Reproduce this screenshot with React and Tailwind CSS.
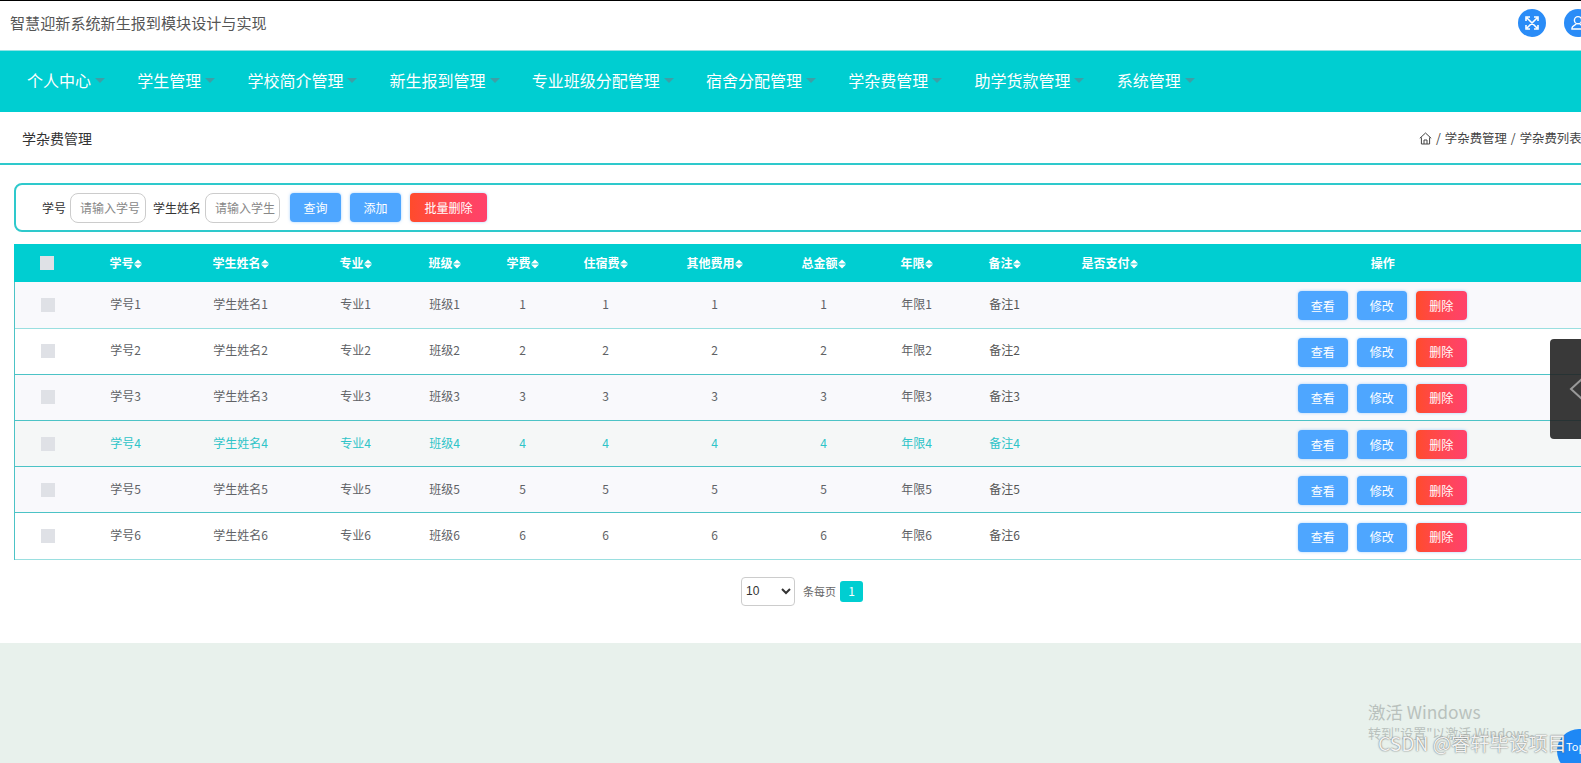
import React from "react";

const cols = [
  ["学号", 90], ["学生姓名", 140], ["专业", 90], ["班级", 88], ["学费", 68], ["住宿费", 98],
  ["其他费用", 120], ["总金额", 98], ["年限", 88], ["备注", 88], ["是否支付", 122],
];
const nav = ["个人中心", "学生管理", "学校简介管理", "新生报到管理", "专业班级分配管理", "宿舍分配管理", "学杂费管理", "助学货款管理", "系统管理"];
const rows = [1, 2, 3, 4, 5, 6];

function Sort() {
  return (
    <svg className="inline-block align-[-1px]" width="8" height="10" viewBox="0 0 8 10" fill="#fff">
      <path d="M4 0.5 8 4.4H0z" />
      <path d="M4 9.5 0 5.6h8z" />
    </svg>
  );
}

function Btn({ children, red, w }) {
  return (
    <button className={`${w} h-[29px] rounded-[4px] text-[12px] text-white shadow-[0_0_3px_rgba(78,166,255,0.5)] ${red ? "bg-gradient-to-r from-[#ff4b2b] to-[#ff416c]" : "bg-[#4ea6ff]"}`}>
      {children}
    </button>
  );
}

export default function App() {
  return (
    <div className="relative w-[1581px] h-[763px] overflow-hidden flex flex-col bg-[#e8f1ec] font-['Noto_Sans_CJK_SC','Liberation_Sans',sans-serif]">
      <header className="h-[50px] shrink-0 bg-white border-t border-black flex items-center pl-[10px] pr-0 justify-between overflow-hidden">
        <span className="text-[15.1px] text-[#555] -mt-[7px]">智慧迎新系统新生报到模块设计与实现</span>
        <div className="flex gap-[18px] -mr-[11px] -mt-[5px]">
          <span className="w-[28px] h-[28px] rounded-full bg-[#2a8cf7] flex items-center justify-center">
            <svg width="16" height="16" viewBox="0 0 16 16" fill="none" stroke="#fff" strokeWidth="1.6">
              <path d="M2 6V2h4M14 6V2h-4M2 10v4h4M14 10v4h-4M3 3l10 10M13 3 3 13" />
            </svg>
          </span>
          <span className="w-[28px] h-[28px] rounded-full bg-[#2a8cf7] flex items-center justify-center">
            <svg width="16" height="16" viewBox="0 0 16 16" fill="none" stroke="#fff" strokeWidth="1.4">
              <circle cx="8" cy="5.2" r="3.6" />
              <path d="M6 9c0 1-4 1.6-4 4v1h12v-1c0-2.4-4-3-4-4" />
            </svg>
          </span>
        </div>
      </header>

      <nav className="h-[62px] shrink-0 bg-[#00ced1] border-t border-[#8fe3e5] flex items-center pl-[27px] gap-[32.2px] text-white text-[16px]">
        {nav.map((n) => (
          <div key={n} className="flex items-center whitespace-nowrap -mt-[4px]">
            <span>{n}</span>
            <span className="ml-[4px] mt-[2px] w-0 h-0 border-x-[5px] border-x-transparent border-t-[5px] border-t-[#3f9ea6]" />
          </div>
        ))}
      </nav>

      <div className="h-[53px] shrink-0 bg-white border-b-2 border-[#2ec9cc] flex items-center justify-between pl-[22px]">
        <span className="text-[14px] text-[#333] mt-[2px]">学杂费管理</span>
        <div className="flex items-center text-[12.4px] text-[#444] whitespace-nowrap w-[162px] shrink-0 overflow-hidden mt-[2px]">
          <svg className="shrink-0" width="13" height="13" viewBox="0 0 13 13" fill="none" stroke="#444" strokeWidth="1">
            <path d="M.8 6.3 6.5 1l5.7 5.3M2.4 5.4V12h8.2V5.4M5 12V8h3v4" />
          </svg>
          <span className="mx-[4px]">/</span>
          <span>学杂费管理</span>
          <span className="mx-[4px]">/</span>
          <span>学杂费列表</span>
        </div>
      </div>

      <main className="h-[478px] shrink-0 bg-white pt-[18px] pl-[14px]">
        <div className="w-[1600px] h-[49px] border-2 border-[#2ec9cc] rounded-[8px] flex items-center pl-[26px] text-[12px]">
          <label className="text-[#333] mr-[4px]">学号</label>
          <div className="w-[76px] h-[30px] border border-[#ccc] rounded-[8px] flex items-center pl-[9px] text-[#888] mr-[7px]">请输入学号</div>
          <label className="text-[#333] mr-[4px]">学生姓名</label>
          <div className="w-[75px] h-[30px] border border-[#ccc] rounded-[8px] flex items-center pl-[9px] text-[#888] overflow-hidden whitespace-nowrap mr-[10px]">请输入学生</div>
          <div className="flex gap-[9px]">
            <Btn w="w-[51px]">查询</Btn>
            <Btn w="w-[51px]">添加</Btn>
            <Btn w="w-[77px]" red>批量删除</Btn>
          </div>
        </div>

        <table className="mt-[12px] -ml-[0.5px] w-[1581px] table-fixed border-collapse text-[12px] text-[#606266]">
          <colgroup>
            <col className="w-[66.5px]" />
            {cols.map(([n, w]) => (
              <col key={n} style={{ width: w }} />
            ))}
            <col className="w-[424.5px]" />
          </colgroup>
          <thead>
            <tr className="h-[38px] bg-[#00ced1] text-white">
              <th className="font-normal">
                <span className="block mx-auto w-[14px] h-[14px] bg-[#dfe1e6]" />
              </th>
              {cols.map(([n]) => (
                <th key={n} className="font-bold whitespace-nowrap">
                  {n}
                  <Sort />
                </th>
              ))}
              <th className="font-bold">操作</th>
            </tr>
          </thead>
          <tbody>
            {rows.map((r) => {
              const hover = r === 4;
              const bg = hover ? "bg-[#f5f7f7] text-[#2ec4c8]" : r % 2 ? "bg-[#f9f9fc]" : "bg-white";
              const line = r === 1 || r === 6 ? "border-[#9adfe0]" : "border-[#4cc3c6]";
              return (
                <tr key={r} className={`h-[46.2px] border-b ${line} ${bg}`}>
                  <td className="border-l border-[#4cc3c6]">
                    <span className="block mx-auto w-[14px] h-[14px] bg-[#dfe1e6]" />
                  </td>
                  {[`学号${r}`, `学生姓名${r}`, `专业${r}`, `班级${r}`, r, r, r, r, `年限${r}`].map((c, i) => (
                    <td key={i} className="text-center pb-[2px]">{c}</td>
                  ))}
                  <td className={`text-center pb-[2px] ${hover ? "text-[#2ec4c8]" : "text-[#555]"}`}>{`备注${r}`}</td>
                  <td />
                  <td>
                    <div className="flex justify-center gap-[9px] pt-[2px] pr-[1px]">
                      <Btn w="w-[50px]">查看</Btn>
                      <Btn w="w-[50px]">修改</Btn>
                      <Btn w="w-[51px]" red>删除</Btn>
                    </div>
                  </td>
                </tr>
              );
            })}
          </tbody>
        </table>

        <div className="mt-[17px] ml-[727px] flex items-center text-[11px] text-[#666]">
          <select className="w-[54px] h-[29px] border border-[#ccc] rounded-[4px] bg-white text-[12px] text-[#333] font-['Liberation_Sans',sans-serif]">
            <option>10</option>
          </select>
          <span className="ml-[8px]">条每页</span>
          <span className="ml-[4px] w-[23px] h-[21px] rounded-[3px] bg-[#00ced1] text-white text-[12px] flex items-center justify-center">1</span>
        </div>
      </main>

      <footer className="flex-1" />

      <div className="absolute left-[1550px] top-[339px] w-[40px] h-[100px] rounded-l-[4px] bg-[rgba(35,35,35,0.9)]">
        <svg className="absolute left-[18px] top-[39px]" width="14" height="22" viewBox="0 0 14 22" fill="none" stroke="#999" strokeWidth="2">
          <path d="M14 1 3 11l11 10" />
        </svg>
      </div>

      <div className="absolute left-[1368px] top-[699px] text-[17.4px] text-[#b9c1bd] whitespace-nowrap">激活 Windows</div>
      <div className="absolute left-[1368px] top-[723px] text-[13px] text-[#b9c1bd] whitespace-nowrap">转到"设置"以激活 Windows。</div>
      <div className="absolute left-[1557px] top-[729px] w-[44px] h-[44px] rounded-full bg-[#1e88f5] text-white text-[11px] pl-[9px] pt-[9px]">Top</div>
      <div className="absolute left-[1378px] top-[729px] text-[19.3px] text-[#f2f2f2] whitespace-nowrap [text-shadow:0_0_1.5px_#444]">CSDN @睿轩毕设项目</div>
    </div>
  );
}
